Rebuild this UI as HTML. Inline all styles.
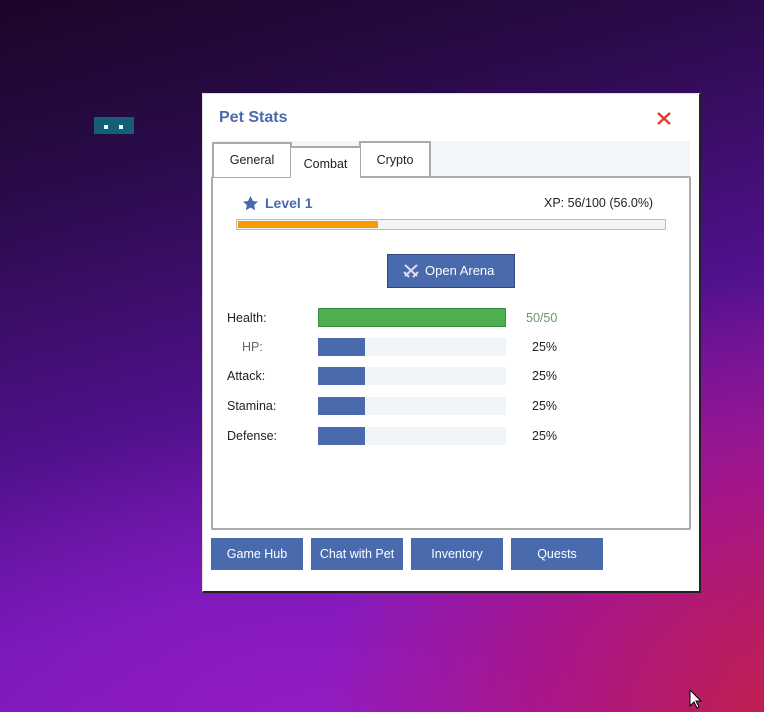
<!DOCTYPE html>
<html><head><style>
*{margin:0;padding:0;box-sizing:border-box}
body{width:764px;height:712px;overflow:hidden;position:relative;font-family:"Liberation Sans",Arial,sans-serif;
background:
radial-gradient(ellipse 560px 520px at 800px 720px,#c42048 0%,rgba(180,20,120,.75) 45%,rgba(0,0,0,0) 85%),
radial-gradient(ellipse 500px 300px at 300px 720px,rgba(160,30,200,.6) 0%,rgba(0,0,0,0) 100%),
linear-gradient(165deg,#1a0628 0%,#2a0b4a 22%,#4c1085 48%,#7318b8 72%,#8a1ab8 100%);}
.a{position:absolute}
.win{left:202px;top:93px;width:499px;height:500px;background:#fff;border-right:2px solid #222;border-bottom:2px solid #222;border-top:1px solid #ddd;border-left:1px solid #ddd}
.t{font-size:12.5px;color:#222}
.btn{background:#4a6aae;color:#fff;font-size:12.5px;text-align:center;line-height:32px;height:32px;width:92px;top:538px}
.bar{left:318px;width:188px;height:18px;background:#f2f5f8}
.bar i{display:block;width:47px;height:100%;background:#4a6aae}
</style></head><body>
<div class="a" style="left:94px;top:117px;width:40px;height:17px;background:#145f78"></div>
<div class="a" style="left:104px;top:125px;width:4px;height:4px;background:#fff"></div>
<div class="a" style="left:119px;top:125px;width:4px;height:4px;background:#fff"></div>
<div class="a win"></div>
<div class="a" style="left:219px;top:109px;font-size:16px;font-weight:bold;color:#4a6aae">Pet Stats</div>
<svg class="a" style="left:656px;top:111px" width="16" height="15"><path d="M2 2L14 13M14 2L2 13" stroke="#e03a2a" stroke-width="2.4"/></svg>
<div class="a" style="left:212px;top:141px;width:478px;height:35px;background:#f3f6f9"></div>
<div class="a" style="left:211px;top:176px;width:480px;height:354px;border:2px solid #aaa;border-radius:2px;background:#fff"></div>
<div class="a t" style="left:212px;top:142px;width:80px;height:35px;border:2px solid #aaa;border-bottom:none;background:#fff;text-align:center;line-height:33px">General</div>
<div class="a t" style="left:359px;top:141px;width:72px;height:35px;border:2px solid #aaa;border-bottom:none;background:#fff;text-align:center;line-height:34px">Crypto</div>
<div class="a t" style="left:291px;top:146px;width:69px;height:32px;border-top:2px solid #aaa;background:#fff;text-align:center;line-height:33px">Combat</div>
<svg class="a" style="left:242px;top:195px" width="17" height="16"><path d="M8.5 1L11 6l5 .6-3.8 3.4 1 5.2-4.7-2.6-4.7 2.6 1-5.2L1 6.6 6 6z" fill="#4a6aae"/></svg>
<div class="a" style="left:265px;top:195px;font-size:14px;font-weight:bold;color:#4a6aae">Level 1</div>
<div class="a t" style="left:544px;top:196px">XP: 56/100 (56.0%)</div>
<div class="a" style="left:236px;top:219px;width:430px;height:11px;background:#f2f5f8;border:1px solid #bbb"></div>
<div class="a" style="left:238px;top:221px;width:140px;height:7px;background:#f99a00"></div>
<div class="a" style="left:387px;top:254px;width:128px;height:34px;background:#4a6aae;border:1px solid #2e4880;color:#fff;font-size:13px;line-height:32px;padding-left:37px">Open Arena</div>
<svg class="a" style="left:403px;top:263px" width="16" height="15"><path d="M2 2L14 13M14 2L2 13M1 9l5 5M15 9l-5 5" stroke="#dde" stroke-width="2"/></svg>
<div class="a t" style="left:227px;top:311px">Health:</div>
<div class="a" style="left:318px;top:308px;width:188px;height:19px;background:#4caf50;border:1px solid #3a8a3e"></div>
<div class="a" style="left:526px;top:311px;font-size:12.5px;color:#6a9a6a">50/50</div>
<div class="a t" style="left:242px;top:340px;color:#666">HP:</div><div class="a bar" style="top:338px"><i></i></div><div class="a t" style="left:532px;top:340px">25%</div>
<div class="a t" style="left:227px;top:369px">Attack:</div><div class="a bar" style="top:367px"><i></i></div><div class="a t" style="left:532px;top:369px">25%</div>
<div class="a t" style="left:227px;top:399px">Stamina:</div><div class="a bar" style="top:397px"><i></i></div><div class="a t" style="left:532px;top:399px">25%</div>
<div class="a t" style="left:227px;top:429px">Defense:</div><div class="a bar" style="top:427px"><i></i></div><div class="a t" style="left:532px;top:429px">25%</div>
<div class="a btn" style="left:211px">Game Hub</div>
<div class="a btn" style="left:311px">Chat with Pet</div>
<div class="a btn" style="left:411px">Inventory</div>
<div class="a btn" style="left:511px">Quests</div>
<svg class="a" style="left:689px;top:689px" width="14" height="20"><path d="M1 1v16l4-4 3 6 2-1-3-6h5z" fill="#fff" stroke="#000"/></svg>
</body></html>
